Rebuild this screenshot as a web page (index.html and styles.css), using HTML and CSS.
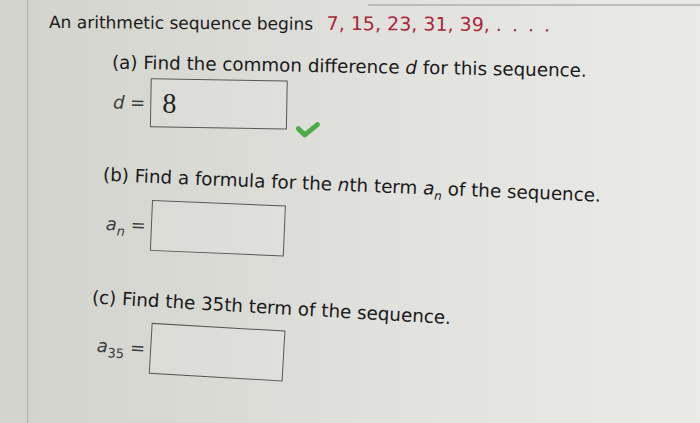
FILE: index.html
```html
<!DOCTYPE html>
<html>
<head>
<meta charset="utf-8">
<link rel="stylesheet" href="styles.css">
</head>
<body>
<div class="frame">
  <p class="title">An arithmetic sequence begins <span class="seq">7, 15, 23, 31, 39, <span class="dots">. . . .</span></span></p>

  <section class="part part-a">
    <p class="prompt">(a) Find the common difference <i class="var">d</i> for this sequence.</p>
    <div class="answer">
      <span class="label"><i>d</i> =</span>
      <span class="box"><span class="value">8</span></span>
      <svg class="check" width="26" height="18" viewBox="0 0 26 18"><path d="M3.5 8 L10 14 L22.5 3.5" fill="none" stroke="#4cab47" stroke-width="5" stroke-linecap="round" stroke-linejoin="round"/></svg>
    </div>
  </section>

  <section class="part part-b">
    <p class="prompt">(b) Find a formula for the <i class="var">n</i>th term <i class="var">a<sub>n</sub></i> of the sequence.</p>
    <div class="answer">
      <span class="label"><i>a<sub>n</sub></i> =</span>
      <span class="box"></span>
    </div>
  </section>

  <section class="part part-c">
    <p class="prompt">(c) Find the 35th term of the sequence.</p>
    <div class="answer">
      <span class="label"><i>a</i><sub>35</sub> =</span>
      <span class="box"></span>
    </div>
  </section>
</div>
</body>
</html>
```

FILE: styles.css
```css
html, body {
  margin: 0;
  padding: 0;
}
body {
  width: 700px;
  height: 423px;
  overflow: hidden;
  background: linear-gradient(to right, #d3d3cd 0%, #dadad5 30%, #e3e3e0 65%, #eaeae8 100%);
  font-family: "DejaVu Sans", Verdana, sans-serif;
  color: #1a1a1a;
}
.frame {
  position: relative;
  margin-left: 27px;
  height: 423px;
  box-sizing: border-box;
  border-left: 1px solid rgba(110, 110, 105, 0.35);
  padding-top: 11px;
}
.frame::before {
  content: "";
  position: absolute;
  top: 4px;
  left: 340px;
  right: 0;
  border-top: 2px solid rgba(140, 140, 135, 0.45);
}
p {
  margin: 0;
}
.title {
  font-size: 17px;
  line-height: 20px;
  padding-left: 21px;
  transform: rotate(0.4deg);
  transform-origin: 21px 10px;
  white-space: nowrap;
}
.seq {
  color: #a8283a;
  margin-left: 8px;
  font-size: 19px;
}
.dots {
  word-spacing: 4px;
}
.part {
  white-space: nowrap;
}
.prompt {
  font-size: 18.3px;
  line-height: 22px;
}
.var {
  font-style: italic;
}
sub {
  font-size: 12px;
  vertical-align: -5px;
  line-height: 0;
}
.answer {
  display: grid;
  grid-template-columns: 117px auto auto;
  column-gap: 5px;
  align-items: center;
  justify-content: start;
}
.label {
  justify-self: end;
  font-size: 18px;
  line-height: 22px;
  color: #3c3c3c;
  white-space: nowrap;
}
.label i {
  font-style: italic;
}
.label sub {
  font-size: 13px;
}
.box {
  width: 134px;
  border: 1.5px solid #575755;
  box-sizing: border-box;
  background: rgba(255, 255, 255, 0.1);
  display: flex;
  align-items: center;
}
.value {
  font-family: "Liberation Serif", "Times New Roman", serif;
  font-size: 28px;
  line-height: 30px;
  padding-left: 11px;
  color: #222;
}
.check {
  align-self: end;
  margin-bottom: -9px;
  margin-left: 3px;
}

.part-a {
  margin-top: 20px;
  transform: rotate(1deg);
  transform-origin: 112px 11px;
}
.part-a .prompt {
  padding-left: 84px;
}
.part-a .answer {
  margin-top: 4px;
  grid-template-columns: 118px auto auto;
}
.part-a .box {
  width: 137px;
  height: 49px;
}

.part-b {
  margin-top: 38px;
  transform: rotate(2.4deg);
  transform-origin: 103px 11px;
}
.part-b .prompt {
  padding-left: 75px;
}
.part-b .answer {
  margin-top: 12px;
  grid-template-columns: 120px auto;
}
.part-b .box {
  height: 51px;
}

.part-c {
  margin-top: 38px;
  transform: rotate(3.3deg);
  transform-origin: 92px 11px;
}
.part-c .prompt {
  padding-left: 64px;
}
.part-c .answer {
  margin-top: 11px;
  grid-template-columns: 120px auto;
}
.part-c .box {
  height: 51px;
}
```
